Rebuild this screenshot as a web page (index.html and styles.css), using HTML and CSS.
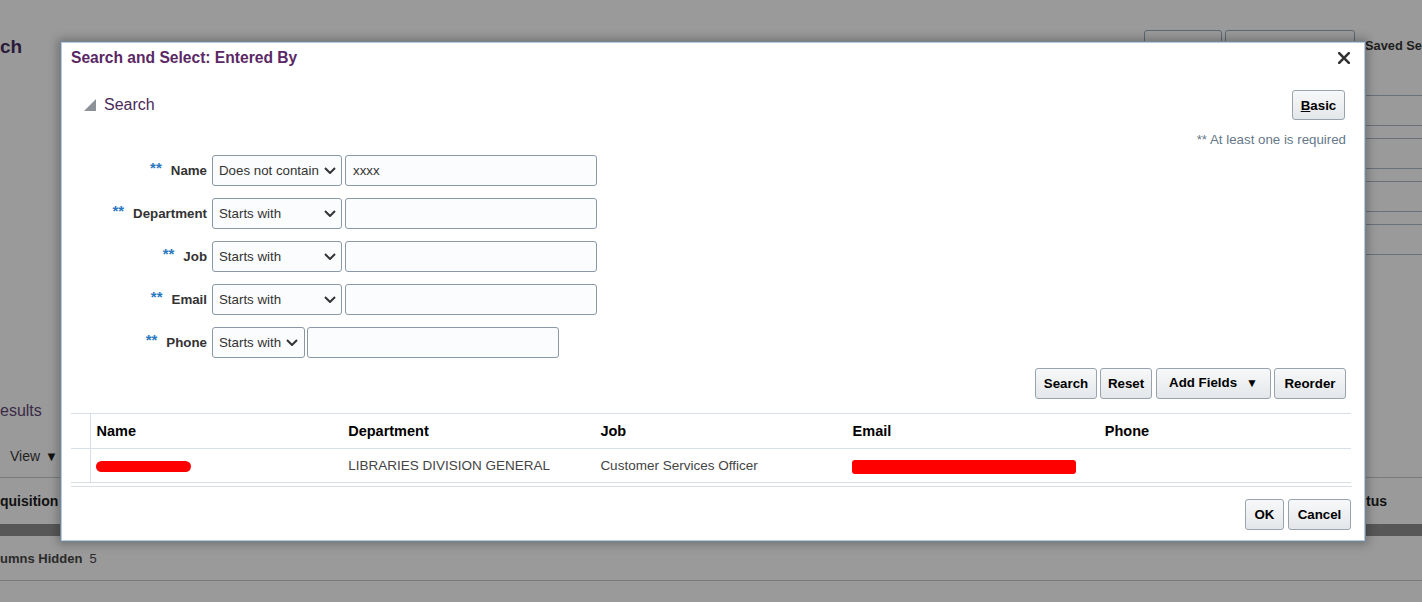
FILE: index.html
```html
<!DOCTYPE html>
<html lang="en">
<head>
<meta charset="utf-8">
<title>Search and Select: Entered By</title>
<link rel="stylesheet" href="styles.css">
</head>
<body>
<div class="page">
  <div class="page-head">
    <div class="page-title">ch</div>
    <div class="top-btns">
      <div class="pbtn pbtn-a">Done</div>
      <div class="pbtn pbtn-b">Manage Watchlist</div>
    </div>
    <div class="saved">Saved Se</div>
  </div>
  <div class="side">
    <div class="side-box"></div>
    <div class="side-box"></div>
    <div class="side-box"></div>
    <div class="side-box"></div>
  </div>
  <div class="results-title">esults</div>
  <div class="view-row">View <span class="caret">&#9660;</span></div>
  <div class="col-row"><span>quisition</span><span class="col-right">tus</span></div>
  <div class="dark-bar"></div>
  <div class="hidden-row"><b>umns Hidden</b>&nbsp; 5</div>
</div>

<div class="dialog">
  <div class="dlg-title">
    <h1>Search and Select: Entered By</h1>
    <span class="close">
      <svg width="12" height="12" viewBox="0 0 12 12"><path d="M1.2 1.2 L10.8 10.8 M10.8 1.2 L1.2 10.8" stroke="#333" stroke-width="2.6" stroke-linecap="square" fill="none"/></svg>
    </span>
  </div>

  <div class="search-head">
    <svg class="disclose" width="12" height="12" viewBox="0 0 12 12"><polygon points="12,0 12,12 0,12" fill="#8d9299"/></svg>
    <span class="sh-text">Search</span>
    <span class="btn btn-basic"><u>B</u>asic</span>
  </div>

  <div class="req-note">** At least one is required</div>

  <div class="form">
    <div class="frow">
      <div class="flabel"><span class="req">**</span><span class="lbl">Name</span></div>
      <div class="sel sel-wide"><span>Does not contain</span><svg width="12" height="7" viewBox="0 0 12 7"><polyline points="1,1 6,6 11,1" fill="none" stroke="#333" stroke-width="2"/></svg></div>
      <div class="inp">xxxx</div>
    </div>
    <div class="frow">
      <div class="flabel"><span class="req">**</span><span class="lbl">Department</span></div>
      <div class="sel sel-wide"><span>Starts with</span><svg width="12" height="7" viewBox="0 0 12 7"><polyline points="1,1 6,6 11,1" fill="none" stroke="#333" stroke-width="2"/></svg></div>
      <div class="inp"></div>
    </div>
    <div class="frow">
      <div class="flabel"><span class="req">**</span><span class="lbl">Job</span></div>
      <div class="sel sel-wide"><span>Starts with</span><svg width="12" height="7" viewBox="0 0 12 7"><polyline points="1,1 6,6 11,1" fill="none" stroke="#333" stroke-width="2"/></svg></div>
      <div class="inp"></div>
    </div>
    <div class="frow">
      <div class="flabel"><span class="req">**</span><span class="lbl">Email</span></div>
      <div class="sel sel-wide"><span>Starts with</span><svg width="12" height="7" viewBox="0 0 12 7"><polyline points="1,1 6,6 11,1" fill="none" stroke="#333" stroke-width="2"/></svg></div>
      <div class="inp"></div>
    </div>
    <div class="frow">
      <div class="flabel"><span class="req">**</span><span class="lbl">Phone</span></div>
      <div class="sel sel-narrow"><span>Starts with</span><svg width="12" height="7" viewBox="0 0 12 7"><polyline points="1,1 6,6 11,1" fill="none" stroke="#333" stroke-width="2"/></svg></div>
      <div class="inp inp-phone"></div>
    </div>
  </div>

  <div class="actions">
    <span class="btn b-search">Search</span>
    <span class="btn b-reset">Reset</span>
    <span class="btn b-add">Add Fields <span class="tri">&#9660;</span></span>
    <span class="btn b-reorder">Reorder</span>
  </div>

  <table class="results">
    <thead>
      <tr>
        <th class="c0"></th>
        <th>Name</th>
        <th>Department</th>
        <th>Job</th>
        <th>Email</th>
        <th>Phone</th>
      </tr>
    </thead>
    <tbody>
      <tr>
        <td class="c0"></td>
        <td><span class="redact r-name"></span></td>
        <td>LIBRARIES DIVISION GENERAL</td>
        <td>Customer Services Officer</td>
        <td><span class="redact r-email"></span></td>
        <td></td>
      </tr>
    </tbody>
  </table>
  <div class="tbl-end"></div>

  <div class="footer">
    <span class="btn b-ok">OK</span>
    <span class="btn b-cancel">Cancel</span>
  </div>
</div>
</body>
</html>
```

FILE: styles.css
```css
* { box-sizing: border-box; }

body {
  margin: 0;
  width: 1422px;
  height: 602px;
  overflow: hidden;
  position: relative;
  background: #9a9a9a;
  font-family: "Liberation Sans", Arial, sans-serif;
  color: #222;
}

/* ---------- background page (dimmed) ---------- */
.page {
  display: flex;
  flex-direction: column;
}

.page-head {
  display: flex;
  align-items: flex-start;
  padding-top: 30px;
  height: 58px;
}

.page-title {
  margin-top: 6px;
  font-size: 19px;
  font-weight: bold;
  color: #2b1b3a;
  line-height: 22px;
}

.top-btns {
  margin-left: auto;
  display: flex;
  gap: 3px;
}

.pbtn {
  height: 28px;
  border: 1px solid #5d6771;
  border-radius: 3px;
  font-size: 13px;
  font-weight: bold;
  color: #1a1a1a;
  display: flex;
  align-items: center;
  justify-content: center;
  padding-top: 4px;
}
.pbtn-a { width: 78px; }
.pbtn-b { width: 130px; }

.saved {
  margin-left: 10px;
  margin-top: 8px;
  white-space: nowrap;
  font-size: 12.8px;
  font-weight: bold;
  color: #1e1e1e;
}

.side {
  align-self: flex-end;
  width: 56px;
  margin-top: 37px;
  display: flex;
  flex-direction: column;
  gap: 12px;
}
.side-box {
  height: 31px;
  border-top: 1px solid #6b7178;
  border-bottom: 1px solid #6b7178;
}

.results-title {
  margin-top: 146px;
  font-size: 16px;
  line-height: 20px;
  color: #3a2a48;
}

.view-row {
  margin-top: 25px;
  padding-left: 10px;
  padding-bottom: 10px;
  font-size: 14px;
  line-height: 20px;
  color: #1f1f1f;
  border-bottom: 1px solid #7a7a7a;
}
.caret { font-size: 13px; margin-left: 1px; color: #111; }

.col-row {
  height: 46px;
  display: flex;
  align-items: center;
  justify-content: space-between;
  font-size: 14px;
  font-weight: bold;
  color: #111;
}
.col-right { width: 56px; }

.dark-bar {
  height: 12px;
  background: #575757;
}

.hidden-row {
  height: 45px;
  display: flex;
  align-items: center;
  font-size: 13px;
  color: #2a2a2a;
  border-bottom: 1px solid #7a7a7a;
}

/* ---------- dialog ---------- */
.dialog {
  position: absolute;
  left: 60px;
  top: 41px;
  width: 1306px;
  height: 501px;
  background: #fff;
  border: 1px solid #74869a;
  box-shadow: 0 0 0 1px #b9c8d6 inset, 0 0 9px 2px rgba(0, 0, 0, 0.28);
  display: flex;
  flex-direction: column;
}

.dlg-title {
  height: 31px;
  display: flex;
  align-items: center;
  justify-content: space-between;
  padding: 0 15px 0 10px;
}
.dlg-title h1 {
  margin: 0;
  font-size: 15.6px;
  font-weight: bold;
  color: #5a2865;
}
.close { display: flex; }

.search-head {
  margin-top: 17px;
  height: 30px;
  display: flex;
  align-items: center;
  padding: 0 20px 0 23px;
}
.disclose { margin-top: -1px; }
.sh-text {
  margin-left: 8px;
  font-size: 16px;
  color: #4a2a5a;
}

.btn {
  display: inline-flex;
  align-items: center;
  justify-content: center;
  height: 31px;
  border: 1px solid #98a3ad;
  border-radius: 3px;
  background: linear-gradient(#f7f8f9, #e4e7ea);
  font-size: 13.3px;
  font-weight: bold;
  color: #000;
}
.btn-basic {
  margin-left: auto;
  width: 53px;
  height: 30px;
}

.req-note {
  margin-top: 12px;
  padding-right: 19px;
  text-align: right;
  font-size: 13.3px;
  line-height: 16px;
  color: #66788a;
}

.form {
  margin-top: 7px;
  display: flex;
  flex-direction: column;
  gap: 12px;
}

.frow {
  display: flex;
  align-items: center;
  height: 31px;
}

.flabel {
  width: 146px;
  display: flex;
  align-items: center;
  justify-content: flex-end;
  gap: 9px;
  margin-right: 5px;
}
.req {
  font-size: 15px;
  font-weight: bold;
  color: #2a78c2;
  margin-bottom: 6px;
}
.lbl {
  font-size: 13.3px;
  font-weight: bold;
  color: #333;
}

.sel {
  height: 31px;
  border: 1px solid #8b99a6;
  border-radius: 3px;
  background: #fbfcfd;
  display: flex;
  align-items: center;
  justify-content: space-between;
  padding: 0 5px 0 6px;
  font-size: 13.3px;
  color: #333;
  margin-right: 3px;
}
.sel-wide { width: 130px; }
.sel-narrow { width: 93px; padding-right: 6px; margin-right: 2px; }

.inp {
  width: 252px;
  height: 31px;
  border: 1px solid #8b99a6;
  border-radius: 3px;
  background: #fbfcfd;
  display: flex;
  align-items: center;
  padding-left: 7px;
  font-size: 13.3px;
  color: #333;
}

.actions {
  margin-top: 10px;
  display: flex;
  justify-content: flex-end;
  gap: 3px;
  padding-right: 19px;
}
.b-search { width: 62px; }
.b-reset { width: 52px; }
.b-add { width: 115px; margin-left: 1px; padding-bottom: 3px; }
.b-reorder { width: 72px; }
.tri { font-size: 12px; margin-left: 9px; margin-top: 1px; }

.results {
  margin: 14px 13px 0 10px;
  width: 1280px;
  border-collapse: collapse;
  table-layout: fixed;
}
.results th,
.results td {
  text-align: left;
  padding: 0 6px;
  border-top: 1px solid #d7dee5;
  border-bottom: 1px solid #d7dee5;
}
.results th {
  height: 35px;
  font-size: 14.5px;
  font-weight: bold;
  color: #000;
  width: 252px;
}
.results td {
  height: 34px;
  font-size: 13.5px;
  color: #444;
}
.results .c0 {
  width: 19px;
  border-right: 1px solid #d7dee5;
}

.redact {
  display: inline-block;
  background: #ff0000;
  vertical-align: middle;
}
.r-name { width: 95px; height: 11px; border-radius: 6px; margin-left: -1px; }
.r-email { width: 224px; height: 14px; border-radius: 3px; margin-left: -1px; margin-top: 3px; }

.tbl-end {
  margin: 3px 13px 0 10px;
  border-top: 1px solid #d7dee5;
}

.footer {
  margin-top: 12px;
  display: flex;
  justify-content: flex-end;
  gap: 4px;
  padding-right: 14px;
}
.b-ok { width: 39px; }
.b-cancel { width: 63px; }
```
